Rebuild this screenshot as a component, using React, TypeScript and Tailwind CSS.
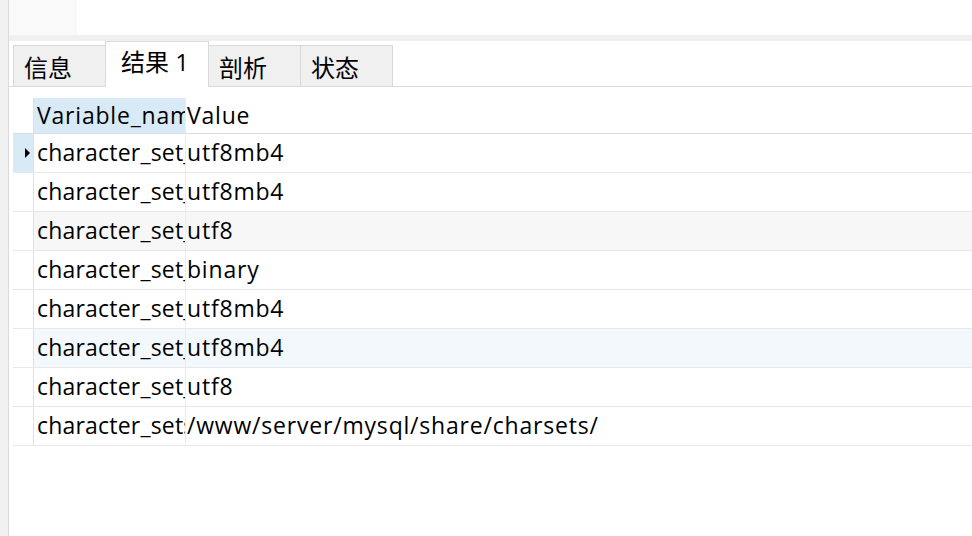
const rows = [
  { name: 'character_set_client', value: 'utf8mb4', bg: 'bg-white', selected: true },
  { name: 'character_set_connection', value: 'utf8mb4', bg: 'bg-white' },
  { name: 'character_set_database', value: 'utf8', bg: 'bg-[#f7f7f7]' },
  { name: 'character_set_filesystem', value: 'binary', bg: 'bg-white' },
  { name: 'character_set_results', value: 'utf8mb4', bg: 'bg-white' },
  { name: 'character_set_server', value: 'utf8mb4', bg: 'bg-[#f3f8fd]' },
  { name: 'character_set_system', value: 'utf8', bg: 'bg-white' },
  { name: 'character_sets_dir', value: '/www/server/mysql/share/charsets/', bg: 'bg-white' },
]

const Tab = ({ label, active }: { label: string; active?: boolean }) => {
  if (active) {
    return (
      <div className="w-[104px] h-[46px] -mb-px -ml-px bg-white border border-b-0 border-[#d9d9d9] flex items-start pt-[4px] pl-[15px] text-[24px] leading-[32px] text-black z-10">
        {label}
      </div>
    )
  }
  return (
    <div className="w-[93px] h-[41px] bg-[#f0f0f0] border border-b-0 border-[#d9d9d9] -ml-px first:ml-0 flex items-start pt-[6px] pl-[10px] text-[24px] leading-[32px] text-black">
      {label}
    </div>
  )
}

const App = () => {
  return (
    <div
      className="w-[972px] h-[536px] bg-white flex overflow-hidden text-black"
      style={{ fontFamily: '"Segoe UI", "Open Sans", "Noto Sans CJK SC", sans-serif' }}
    >
      <div className="w-[9px] h-full bg-[#f0f0f0] border-r border-[#dadada] shrink-0" />
      <div className="flex-1 flex flex-col">
        <div className="h-[35px] flex">
          <div className="w-[68px] h-full bg-[#f9f9f9]" />
        </div>
        <div className="h-[6px] bg-[#f0f0f0]" />
        <div className="h-[46px] flex items-end pl-[4px] border-b border-[#d9d9d9]">
          <Tab label="信息" />
          <Tab label="结果 1" active />
          <Tab label="剖析" />
          <Tab label="状态" />
        </div>
        <div className="pl-[4px] pt-[11px] text-[23px] tracking-[0.8px]">
          <div className="flex h-[36px] border-b border-[#dcdcdc]">
            <div className="w-[21px] border-r border-[#e0e0e0]" />
            <div className="w-[152px] bg-[#d9eaf7] border-r border-[#ececec] pl-[3px] overflow-hidden whitespace-nowrap leading-[35px]">
              Variable_name
            </div>
            <div className="flex-1 pl-[1px] leading-[35px]">Value</div>
          </div>
          {rows.map((r) => (
            <div key={r.name} className="flex h-[39px] border-b border-[#e8e8e8]">
              <div
                className={`w-[21px] border-r border-[#e0e0e0] flex items-center justify-end pr-[3px] ${
                  r.selected ? 'bg-[#d9eaf7]' : 'bg-white'
                }`}
              >
                {r.selected && (
                  <svg width="5" height="10" viewBox="0 0 5 10">
                    <path d="M0 0 L5 5 L0 10 Z" fill="#000" />
                  </svg>
                )}
              </div>
              <div
                className={`w-[152px] border-r border-[#ececec] pl-[3px] overflow-hidden whitespace-nowrap leading-[37px] tracking-[0.2px] ${r.bg}`}
              >
                {r.name}
              </div>
              <div className={`flex-1 pl-[1px] whitespace-nowrap leading-[37px] ${r.bg}`}>{r.value}</div>
            </div>
          ))}
        </div>
      </div>
    </div>
  )
}

export default App
